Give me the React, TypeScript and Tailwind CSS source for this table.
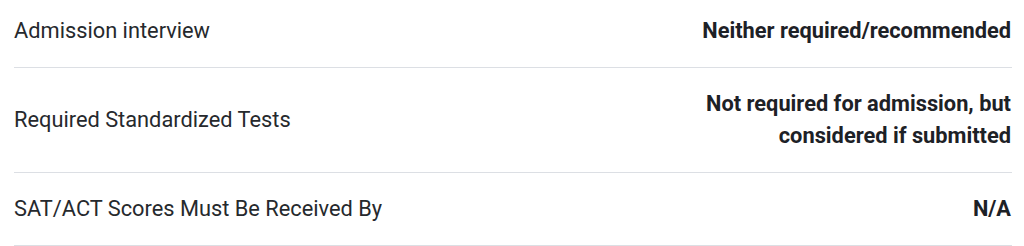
const rows = [
  { label: "Admission interview", value: "Neither required/recommended" },
  {
    label: "Required Standardized Tests",
    value: "Not required for admission, but considered if submitted",
  },
  { label: "SAT/ACT Scores Must Be Received By", value: "N/A" },
];

export default function App() {
  return (
    <div className="bg-white pl-[14px] pr-[12px] font-['Roboto',sans-serif]">
      {rows.map((row, i) => (
        <div
          key={row.label}
          className={`flex items-center justify-between gap-6 border-b border-[#dcdfe4] pb-5 ${
            i === 0 ? "pt-[15px]" : "pt-5"
          }`}
        >
          <span className="text-[21.8px] leading-8 text-[#26292d]">
            {row.label}
          </span>
          <span className="max-w-[380px] pr-[1px] text-right text-[21.8px] font-bold leading-8 text-[#1d2126]">
            {row.value}
          </span>
        </div>
      ))}
    </div>
  );
}
